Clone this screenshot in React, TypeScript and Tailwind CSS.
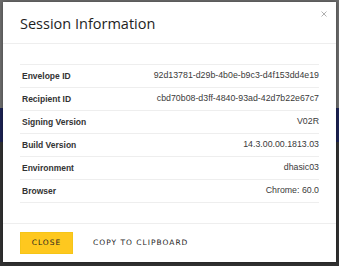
import React from 'react';

const ROWS: [string, string][] = [
  ['Envelope ID', '92d13781-d29b-4b0e-b9c3-d4f153dd4e19'],
  ['Recipient ID', 'cbd70b08-d3ff-4840-93ad-42d7b22e67c7'],
  ['Signing Version', 'V02R'],
  ['Build Version', '14.3.00.00.1813.03'],
  ['Environment', 'dhasic03'],
  ['Browser', 'Chrome: 60.0'],
];

export default function App() {
  return (
    <div className="relative h-[266px] w-[339px] overflow-hidden bg-[#333333]">
      {/* backdrop bands */}
      <div className="flex h-full flex-col">
        <div className="h-[108px] bg-[#6d6d6d]" />
        <div className="h-[34px] bg-[#1c2354]" />
        <div className="flex-1 bg-[#323232]" />
      </div>

      <div className="absolute left-[3px] top-[2px] flex h-[260px] w-[333px] flex-col bg-white font-['DejaVu_Sans',sans-serif] shadow-[0_0_4px_rgba(0,0,0,0.4)]">
        <button type="button" className="absolute right-[9px] top-[9px]">
          <svg width="6" height="6" viewBox="0 0 6 6" className="block">
            <path d="M0.5 0.5L5.5 5.5M5.5 0.5L0.5 5.5" stroke="#b0b0b0" strokeWidth="1" />
          </svg>
        </button>
        <div className="flex h-[42px] items-center border-b border-[#eeeeee] px-[17px] pt-[3px]">
          <h2 className="font-['Open_Sans',sans-serif] text-[14.5px] font-medium text-[#1e1e1e]">
            Session Information
          </h2>
        </div>

        <div className="px-[17px] pt-[20px]">
          <div className="border-t border-[#eeeeee] font-['Liberation_Sans',Arial,sans-serif]">
            {ROWS.map(([k, v]) => (
              <div
                key={k}
                className="flex h-[23px] items-center justify-between border-b border-[#eeeeee]"
              >
                <span className="pl-[2px] text-[8.5px] font-bold text-[#333333]">{k}</span>
                <span className="text-[8.8px] text-[#3a3a3a]">{v}</span>
              </div>
            ))}
          </div>
        </div>

        <div className="mt-[20px] flex flex-1 items-center gap-[20px] border-t border-[#eeeeee] px-[17px]">
          <button
            type="button"
            className="h-[22px] w-[53px] border border-[#f5c518] bg-[#fec81f] text-[7.5px] tracking-[1px] text-[#1e1e1e]"
          >
            CLOSE
          </button>
          <button type="button" className="text-[7.5px] tracking-[1px] text-[#1e1e1e]">
            COPY TO CLIPBOARD
          </button>
        </div>
      </div>
    </div>
  );
}
